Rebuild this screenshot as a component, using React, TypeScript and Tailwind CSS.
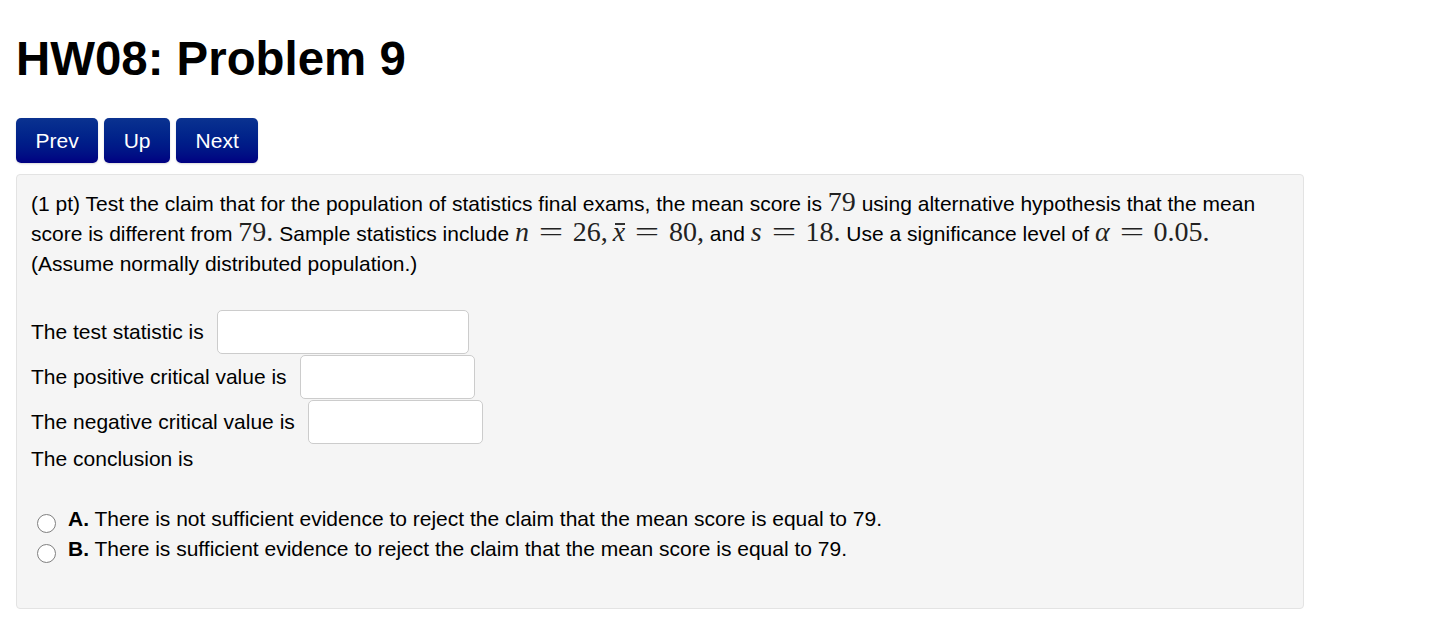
import type { ReactNode } from "react";

function M({ children }: { children: ReactNode }) {
  return (
    <span className="font-['Liberation_Serif',serif] text-[28px] leading-[0] text-[#222]">
      {children}
    </span>
  );
}

function V({ children }: { children: ReactNode }) {
  return <span className="italic">{children}</span>;
}

function Eq() {
  return <span className="mx-[14px] inline-block scale-x-[1.55]">=</span>;
}

function Bar({ children }: { children: ReactNode }) {
  return (
    <span className="relative italic">
      {children}
      <span className="absolute left-[2px] right-0 top-[7px] h-[1.5px] bg-[#333]" />
    </span>
  );
}

function AnswerRow({ label, width }: { label: string; width: string }) {
  return (
    <div className="flex h-[45px] items-center">
      <span>{label}</span>
      <input
        type="text"
        className={`ml-[13px] h-[44px] ${width} rounded-[5px] border border-[#cccccc] bg-white px-2 outline-none`}
      />
    </div>
  );
}

function Choice({ letter, text }: { letter: string; text: string }) {
  return (
    <label className="flex h-[30px] items-start pl-[6px]">
      <span className="mt-[10px] h-[19px] w-[19px] shrink-0 rounded-full border border-[#808080] bg-white" />
      <span className="ml-[12px]">
        <b>{letter}</b> {text}
      </span>
    </label>
  );
}

export default function App() {
  return (
    <div className="min-h-screen w-full bg-white px-4 pt-[33px] font-['Liberation_Sans',Arial,sans-serif] text-black">
      <h1 className="text-[47.4px] font-bold leading-[52px]">HW08: Problem 9</h1>

      <div className="mt-[33px] flex gap-[6px]">
        {["Prev", "Up", "Next"].map((b) => (
          <button
            key={b}
            className="h-[45px] rounded-[5px] bg-gradient-to-b from-[#0b3290] to-[#000082] px-[19.5px] text-[21px] text-white shadow-[0_1px_2px_rgba(0,0,0,0.15)]"
          >
            {b}
          </button>
        ))}
      </div>

      <div className="mt-[11px] w-[1288px] rounded-[4px] border border-[#e3e3e3] bg-[#f5f5f5] px-[14px] pt-[14px] pb-[44px] text-[21px] leading-[30px]">
        <p>
          (1 pt) Test the claim that for the population of statistics final exams, the mean score is{" "}
          <M>79</M> using alternative hypothesis that the mean
          <br />
          score is different from <M>79.</M> Sample statistics include{" "}
          <M>
            <V>n</V>
            <Eq />
            26,<span className="ml-[5px]" />
            <Bar>x</Bar>
            <Eq />
            80,
          </M>{" "}
          and{" "}
          <M>
            <V>s</V>
            <Eq />
            18.
          </M>{" "}
          Use a significance level of{" "}
          <M>
            <V>α</V>
            <Eq />
            0.05.
          </M>
          <br />
          (Assume normally distributed population.)
        </p>

        <div className="mt-[30px]">
          <AnswerRow label="The test statistic is" width="w-[252px]" />
          <AnswerRow label="The positive critical value is" width="w-[175px]" />
          <AnswerRow label="The negative critical value is" width="w-[175px]" />
          <div className="h-[30px]">The conclusion is</div>
        </div>

        <div className="mt-[30px]">
          <Choice
            letter="A."
            text="There is not sufficient evidence to reject the claim that the mean score is equal to 79."
          />
          <Choice
            letter="B."
            text="There is sufficient evidence to reject the claim that the mean score is equal to 79."
          />
        </div>
      </div>
    </div>
  );
}
